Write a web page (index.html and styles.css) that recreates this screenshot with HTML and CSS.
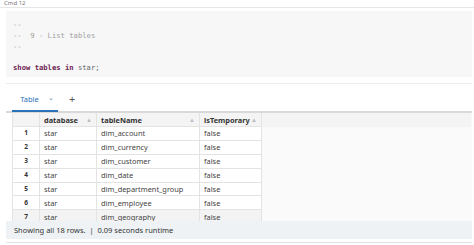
FILE: index.html
```html
<!DOCTYPE html>
<html lang="en">
<head>
    <meta charset="UTF-8">
    <title>Cmd 12</title>
    <link rel="stylesheet" href="styles.css">
</head>
<body>
    <div class="cmd-label">Cmd 12</div>

    <div class="cell">
        <pre class="code"><span class="comment">--</span>
<span class="comment">--  9 - List tables</span>
<span class="comment">--</span>

<span class="kw">show tables in</span> star;</pre>

        <div class="results">
            <div class="tabs">
                <div class="tab active">Table <span class="chev">&#8964;</span></div>
                <div class="tab-add">+</div>
            </div>

            <div class="grid-wrap">
                <table class="grid">
                    <thead>
                        <tr>
                            <th class="num"></th>
                            <th class="c-db">database <span class="sort">&#9650;</span></th>
                            <th class="c-name">tableName <span class="sort">&#9650;</span></th>
                            <th class="c-tmp">isTemporary <span class="sort">&#9650;</span></th>
                            <th class="filler"></th>
                        </tr>
                    </thead>
                    <tbody>
                        <tr><td class="num">1</td><td>star</td><td>dim_account</td><td>false</td><td class="filler"></td></tr>
                        <tr><td class="num">2</td><td>star</td><td>dim_currency</td><td>false</td><td class="filler"></td></tr>
                        <tr><td class="num">3</td><td>star</td><td>dim_customer</td><td>false</td><td class="filler"></td></tr>
                        <tr><td class="num">4</td><td>star</td><td>dim_date</td><td>false</td><td class="filler"></td></tr>
                        <tr><td class="num">5</td><td>star</td><td>dim_department_group</td><td>false</td><td class="filler"></td></tr>
                        <tr><td class="num">6</td><td>star</td><td>dim_employee</td><td>false</td><td class="filler"></td></tr>
                        <tr class="hover"><td class="num">7</td><td>star</td><td>dim_geography</td><td>false</td><td class="filler"></td></tr>
                    </tbody>
                </table>
            </div>

            <div class="footer">Showing all 18 rows. &nbsp;|&nbsp; 0.09 seconds runtime</div>
        </div>
    </div>
</body>
</html>
```

FILE: styles.css
```css
body {
    margin: 0;
    background: #fff;
    font-family: 'Noto Sans', 'Open Sans', sans-serif;
    color: #333;
    width: 474px;
    height: 245px;
    overflow: hidden;
}
.cmd-label {
    font-size: 6px;
    line-height: 7px;
    color: #777;
    padding-left: 4px;
    height: 7px;
    border-bottom: 1px solid #e6e6e6;
}
.cell {
    margin: 3px 2px 0 6px;
}
.code {
    margin: 0;
    height: 54px;
    padding: 9px 7px 3px 7px;
    background: #f7f7f7;
    font-family: 'DejaVu Sans Mono', monospace;
    font-size: 7.2px;
    line-height: 10.8px;
    color: #666;
}
.comment {
    color: #a0a0a0;
}
.kw {
    color: #6e2456;
    font-weight: bold;
}
.results {
    margin-top: 6px;
    border-top: 1px solid #ececec;
    border-bottom: 1px solid #e4e4e4;
    padding-bottom: 3px;
}
.tabs {
    display: flex;
    align-items: center;
    height: 27px;
    padding-left: 6px;
    border-bottom: 2px solid #d9d9d9;
}
.tab {
    height: 27px;
    width: 46px;
    box-sizing: border-box;
    display: flex;
    align-items: center;
    justify-content: center;
    gap: 9px;
    font-size: 7.5px;
    color: #2a72b8;
    margin-bottom: -2px;
    padding: 3px 0 0 4px;
    border-bottom: 2px solid #2a72b8;
}
.chev {
    font-size: 7px;
    color: #5a82b0;
    margin-top: -4px;
}
.tab-add {
    margin-left: 11px;
    font-size: 11px;
    color: #555;
    padding-top: 2px;
}
.grid-wrap {
    margin-left: 6px;
    height: 108px;
    overflow: hidden;
    background: #fafafa;
}
.grid {
    border-collapse: collapse;
    table-layout: fixed;
    width: 100%;
    font-size: 7.4px;
    line-height: 10px;
    color: #444;
}
.grid th,
.grid td {
    height: 12.9px;
    padding: 0 4px;
    border: 1px solid #e3e3e3;
    text-align: left;
    white-space: nowrap;
    overflow: hidden;
    background: #fff;
}
.grid th {
    height: 13px;
    background: #f4f4f4;
    font-weight: bold;
    color: #333;
    border-top: none;
}
.grid th.num { width: 18px; }
.grid th.c-db { width: 48px; }
.grid th.c-name { width: 94px; }
.grid th.c-tmp { width: 53px; }
.grid td.num {
    text-align: center;
    font-weight: bold;
    font-size: 6.5px;
    color: #333;
}
.grid .filler {
    border: none;
    background: #fafafa;
}
.grid th.filler {
    background: #f4f4f4;
}
.grid tr.hover td {
    background: #f3f3f3;
}
.grid tr.hover td.filler {
    background: #fafafa;
}
.sort {
    float: right;
    font-size: 6px;
    color: #bdbdbd;
    margin-top: 0;
}
.footer {
    height: 18px;
    line-height: 18px;
    background: #eef2f5;
    font-size: 7.5px;
    color: #333;
    padding-left: 8px;
}
```
